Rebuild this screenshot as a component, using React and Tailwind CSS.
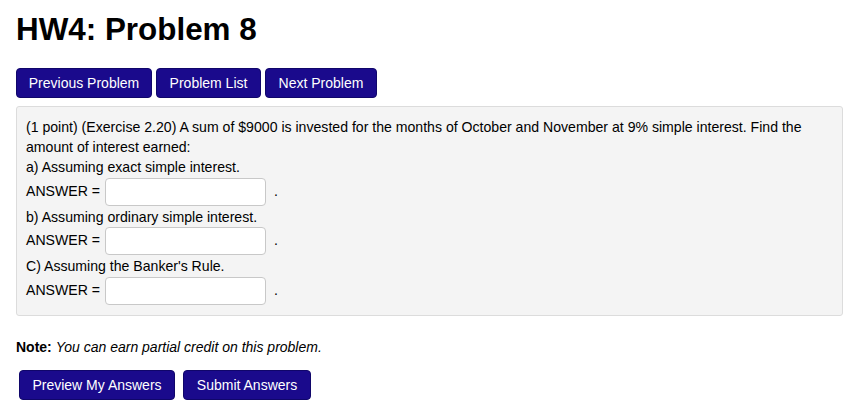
export default function App() {
  const btn =
    "h-[30px] rounded-[4px] border border-[#10066a] bg-[#1a0a8c] text-white text-[14px] leading-none whitespace-nowrap flex items-center justify-center";

  const parts = [
    "a) Assuming exact simple interest.",
    "b) Assuming ordinary simple interest.",
    "C) Assuming the Banker's Rule.",
  ];

  return (
    <div className="bg-white min-h-[411px] px-4 pt-[12px] font-['Liberation_Sans',Arial,sans-serif] text-black">
      {/* Title */}
      <h1 className="text-[31.4px] font-bold leading-[35px]">HW4: Problem 8</h1>

      {/* Navigation */}
      <div className="mt-[21px] flex gap-[4px]">
        <button className={`${btn} w-[136px]`}>Previous Problem</button>
        <button className={`${btn} w-[105px]`}>Problem List</button>
        <button className={`${btn} w-[112px]`}>Next Problem</button>
      </div>

      {/* Problem body */}
      <div className="mt-[8px] w-[827px] rounded-[3px] border border-[#dcdcdc] bg-[#f4f4f4] px-[9px] pt-[10px] pb-[9px] text-[14.1px] leading-[19.5px]">
        <p className="pt-[1px]">
          (1 point) (Exercise 2.20) A sum of $9000 is invested for the months of October and November at 9% simple
          interest. Find the amount of interest earned:
        </p>
        {parts.map((label) => (
          <div key={label}>
            <p className="pt-[1px]">{label}</p>
            <div className="mb-[1px] flex items-center">
              <span className="w-[79px]">ANSWER =</span>
              <input
                type="text"
                className="h-[28px] w-[161px] rounded-[4px] border border-[#c8c8c8] bg-white"
              />
              <span className="ml-[8px]">.</span>
            </div>
          </div>
        ))}
      </div>

      {/* Note */}
      <p className="mt-[21px] text-[14px] leading-[20px]">
        <b>Note:</b> <i>You can earn partial credit on this problem.</i>
      </p>

      {/* Submit */}
      <div className="mt-[13px] ml-[3px] flex gap-[8px]">
        <button className={`${btn} w-[156px]`}>Preview My Answers</button>
        <button className={`${btn} w-[128px]`}>Submit Answers</button>
      </div>
    </div>
  );
}
